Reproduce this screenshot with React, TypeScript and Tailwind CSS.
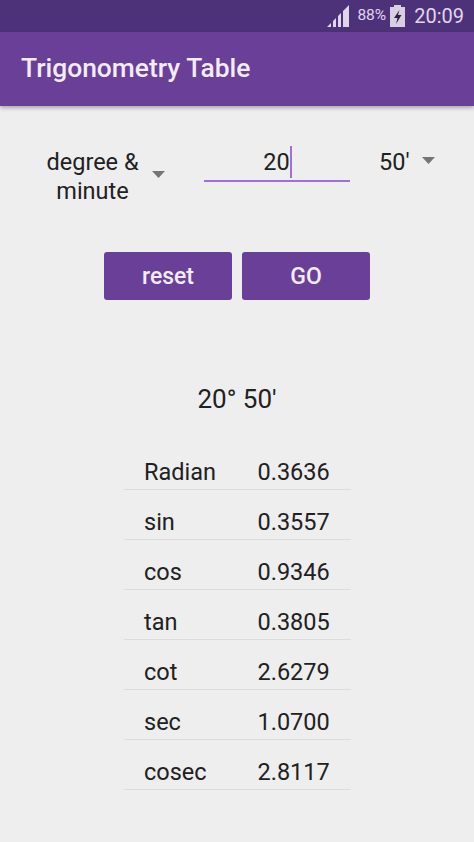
const rows = [
  ["Radian", "0.3636"],
  ["sin", "0.3557"],
  ["cos", "0.9346"],
  ["tan", "0.3805"],
  ["cot", "2.6279"],
  ["sec", "1.0700"],
  ["cosec", "2.8117"],
];

function Caret({ className }: { className: string }) {
  return (
    <svg width="13" height="7" viewBox="0 0 13 7" className={className}>
      <path d="M0 0h13L6.500 7z" fill="#757575" />
    </svg>
  );
}

export default function App() {
  return (
    <div className="w-[474px] h-[842px] overflow-hidden bg-[#eeeeee] font-['Roboto',sans-serif] text-[#212121]">
      {/* Status bar */}
      <div className="h-[32px] bg-[#4e3279] flex items-center justify-end pr-[10px] text-[#e0d6ec]">
        <svg width="23" height="24" viewBox="0 0 23 24" className="mr-[7px]">
          <path d="M0 23l4-4v4zM6 23v-6l3-3v9zM11 23V12l3-3v14zM16 23V7l6-6v22z" fill="#e0d6ec" />
        </svg>
        <span className="text-[15.5px] mr-[4px]">88%</span>
        <svg width="15" height="22" viewBox="0 0 15 22" className="mr-[9px]">
          <path d="M4 0h7v2h4v20H0V2h4z" fill="#d8cfe3" />
          <path d="M9.500 5 4 13h3.500l-1.500 6 5.500-9H8z" fill="#2d2040" />
        </svg>
        <span className="text-[20px]">20:09</span>
      </div>

      {/* App bar */}
      <div className="h-[74px] bg-[#6a3f97] flex items-center pl-[21px] shadow-[0_2px_4px_rgba(0,0,0,0.3)]">
        <h1 className="text-[26.4px] font-medium text-[#f1ecf6] -mt-[1px]">Trigonometry Table</h1>
      </div>

      {/* Inputs */}
      <div className="flex items-start mt-[41px] h-[65px]">
        <div className="w-[186px] flex justify-center pl-[21px]">
          <div className="text-[23.5px] leading-[28.500px] text-center w-[100px] pt-[1px]">degree &amp; minute</div>
          <Caret className="ml-[9px] mt-[24px]" />
        </div>
        <div className="ml-[18px] w-[146px] h-[35px] border-b-2 border-[#a06ee0] flex justify-center">
          <span className="text-[23.5px] leading-[29px] h-[32px] border-r-2 border-[#a06ee0] pt-[2px] -mt-[1px] pl-[1px]">20</span>
        </div>
        <div className="ml-[29px] flex">
          <span className="text-[23.5px] leading-[29px] pt-[1px]">50'</span>
          <Caret className="ml-[12px] mt-[10px]" />
        </div>
      </div>

      {/* Buttons */}
      <div className="flex justify-center gap-[10px] mt-[40px]">
        <button className="w-[128px] h-[48px] bg-[#6a3f97] rounded-[3px] text-[23px] font-medium text-[#f1ecf6] pt-[3px]">reset</button>
        <button className="w-[128px] h-[48px] bg-[#6a3f97] rounded-[3px] text-[23px] font-medium text-[#f1ecf6] pt-[3px]">GO</button>
      </div>

      <div className="text-center text-[26px] leading-[30px] mt-[84px]">20° 50'</div>

      {/* Table */}
      <div className="w-[227px] ml-[124px] mt-[26px]">
        {rows.map(([name, value]) => (
          <div key={name} className="h-[50px] border-b border-[#dcdcdc] flex items-center pl-[20px] text-[23.5px] pt-[17px]">
            <span className="w-[113.500px]">{name}</span>
            <span>{value}</span>
          </div>
        ))}
      </div>
    </div>
  );
}
